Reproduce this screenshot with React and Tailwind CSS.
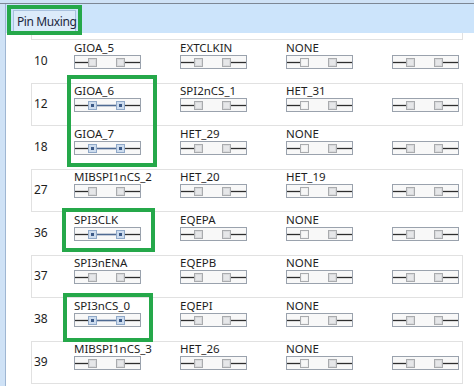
import React from "react";

const rows = [
  { pin: "10", labels: ["GIOA_5", "EXTCLKIN", "NONE", ""], sel: [false, false, false, false], box: false },
  { pin: "12", labels: ["GIOA_6", "SPI2nCS_1", "HET_31", ""], sel: [true, false, false, false], box: true },
  { pin: "18", labels: ["GIOA_7", "HET_29", "NONE", ""], sel: [true, false, false, false], box: false },
  { pin: "27", labels: ["MIBSPI1nCS_2", "HET_20", "HET_19", ""], sel: [false, false, false, false], box: true },
  { pin: "36", labels: ["SPI3CLK", "EQEPA", "NONE", ""], sel: [true, false, false, false], box: false },
  { pin: "37", labels: ["SPI3nENA", "EQEPB", "NONE", ""], sel: [false, false, false, false], box: true },
  { pin: "38", labels: ["SPI3nCS_0", "EQEPI", "NONE", ""], sel: [true, false, false, false], box: false },
  { pin: "39", labels: ["MIBSPI1nCS_3", "HET_26", "NONE", ""], sel: [false, false, false, false], box: true },
];

function Square({ x, selected, light }) {
  if (selected) {
    return (
      <g>
        <rect x={x + 0.5} y={3.5} width={8} height={8} fill="#cddcee" stroke="#8fa8c8" />
        <rect x={x + 3} y={6} width={3} height={3} fill="#3c5a88" />
      </g>
    );
  }
  return (
    <g>
      <rect x={x + 0.5} y={3.5} width={8} height={8} fill={light ? "#f0f0f0" : "#d9dadc"} stroke="#a9abae" />
      <rect x={x + 2} y={5} width={5} height={5} fill={light ? "#f7f7f7" : "#e6e7e9"} />
    </g>
  );
}

function Switch({ selected, lightLeft }) {
  return (
    <svg width="67" height="14" viewBox="0 0 67 14" className="block">
      <rect x="0.5" y="0.5" width="66" height="13" fill="#f8f8f8" stroke="#9aa2ad" />
      <line x1="1" y1="7.5" x2="14" y2="7.5" stroke="#2e2e2e" strokeWidth="1.3" />
      <line x1="51" y1="7.5" x2="66" y2="7.5" stroke="#2e2e2e" strokeWidth="1.3" />
      {selected && <line x1="23" y1="7.5" x2="42" y2="7.5" stroke="#4f6a92" strokeWidth="1.6" />}
      <Square x={14} selected={selected} light={lightLeft} />
      <Square x={42} selected={selected} />
    </svg>
  );
}

function Row({ r }) {
  return (
    <div
      className={
        "flex h-[43px] w-[432px] border " +
        (r.box ? "border-[#e1e1e1]" : "border-transparent")
      }
    >
      <div className="w-[42px] shrink-0 pl-[2px] pt-[13px] text-[12px] leading-[14px] text-[#1e1e1e]">
        {r.pin}
      </div>
      {r.labels.map((l, i) => (
        <div key={i} className={i < 3 ? "w-[106px] shrink-0 flex flex-col" : "flex-1 flex flex-col"}>
          <div className="h-[14px] text-[11.5px] leading-[14px] text-[#1e1e1e] whitespace-nowrap">{l}</div>
          <Switch selected={r.sel[i]} lightLeft={i === 2} />
        </div>
      ))}
    </div>
  );
}

export default function App() {
  return (
    <div
      className="relative w-[474px] h-[386px] overflow-hidden bg-white"
      style={{ fontFamily: '"Noto Sans", "Open Sans", sans-serif' }}
    >
      <div className="h-[3px] bg-[#cfe2f6]" />
      <div className="h-[1px] bg-[#7d8794]" />
      <div className="flex h-[382px]">
        <div className="w-[6px] shrink-0 bg-[#cfe2f6] border-r border-[#9fb6d2]" />
        <div className="flex-1 flex flex-col">
          <div className="h-[29px] bg-[#cce4fb] flex items-end pl-[7px]">
            <div className="h-[23px] w-[63px] pl-[3px] bg-[#dcebfa] border border-b-0 border-[#a9c1dd] text-[12px] tracking-[-0.4px] leading-[21px] text-[#1b2740] whitespace-nowrap">
              Pin Muxing
            </div>
          </div>
          <div className="flex-1 pl-[25px]">
            <div className="h-[7px] w-[432px] border border-t-0 border-[#e1e1e1]" />
            {rows.map((r) => (
              <Row key={r.pin} r={r} />
            ))}
          </div>
        </div>
      </div>

      <div className="absolute left-[7px] top-[5px] w-[75px] h-[30px] border-[4px] border-[#25a84a]" />
      <div className="absolute left-[67px] top-[75px] w-[90px] h-[92px] border-[4px] border-[#25a84a]" />
      <div className="absolute left-[62px] top-[208px] w-[93px] h-[44px] border-[4px] border-[#25a84a]" />
      <div className="absolute left-[63px] top-[293px] w-[90px] h-[49px] border-[4px] border-[#25a84a]" />
    </div>
  );
}
